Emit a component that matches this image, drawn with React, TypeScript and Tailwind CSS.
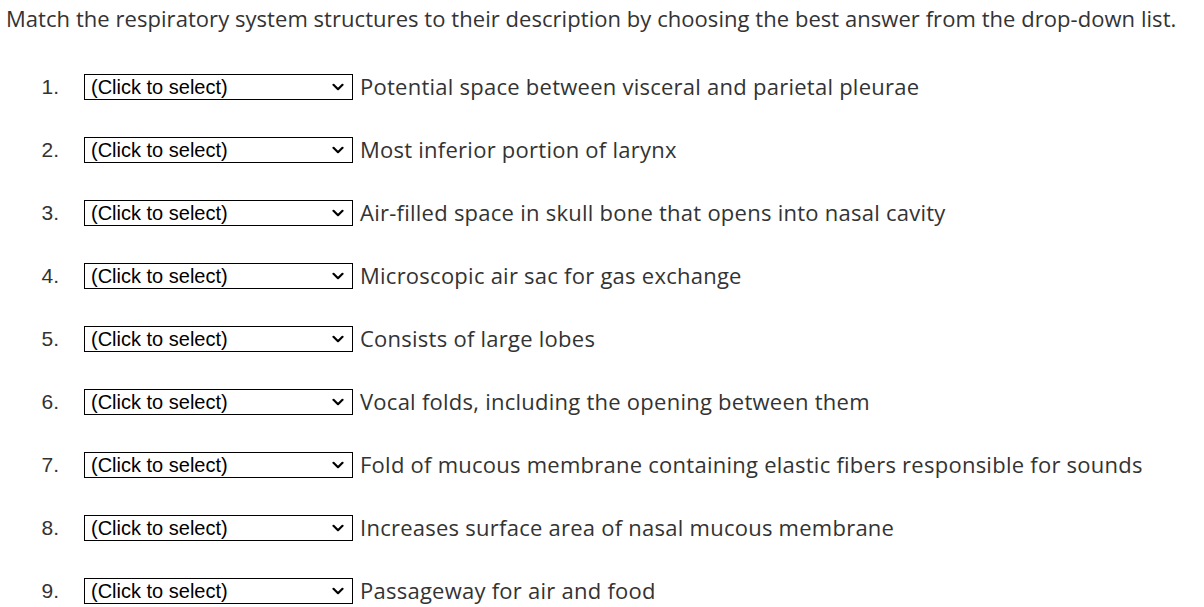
const rows = [
  "Potential space between visceral and parietal pleurae",
  "Most inferior portion of larynx",
  "Air-filled space in skull bone that opens into nasal cavity",
  "Microscopic air sac for gas exchange",
  "Consists of large lobes",
  "Vocal folds, including the opening between them",
  "Fold of mucous membrane containing elastic fibers responsible for sounds",
  "Increases surface area of nasal mucous membrane",
  "Passageway for air and food",
];

function Chevron() {
  return (
    <svg viewBox="0 0 12 8" className="w-[12px] h-[8px]" fill="none">
      <path d="M1.5 1.8L6 6.2l4.5-4.4" stroke="#000" strokeWidth="2.2" strokeLinecap="round" strokeLinejoin="round" />
    </svg>
  );
}

export default function App() {
  return (
    <div className="bg-white w-[1204px] h-[607px] overflow-hidden text-[#333]">
      <p className="pl-[6px] pt-[4px] text-[22px] leading-[28px] font-['Open_Sans',sans-serif] tracking-[0.05px]">
        Match the respiratory system structures to their description by choosing the best answer from the drop-down list.
      </p>
      <ol className="mt-[42px] flex flex-col gap-[38px]">
        {rows.map((text, i) => (
          <li key={i} className="flex items-center h-[25px]">
            <span className="w-[60px] pr-[1px] text-right text-[21px] font-['Liberation_Sans',Arial,sans-serif] text-[#333]">
              {i + 1}.
            </span>
            <div className="ml-[24px] w-[269px] h-[26px] border border-black bg-white flex items-center justify-between pl-[6px] pr-[8px] text-[20px] text-black font-['Liberation_Sans',Arial,sans-serif]">
              <span>(Click to select)</span>
              <Chevron />
            </div>
            <span className="ml-[7px] text-[22px] font-['Open_Sans',sans-serif] tracking-[0.25px]">{text}</span>
          </li>
        ))}
      </ol>
    </div>
  );
}
